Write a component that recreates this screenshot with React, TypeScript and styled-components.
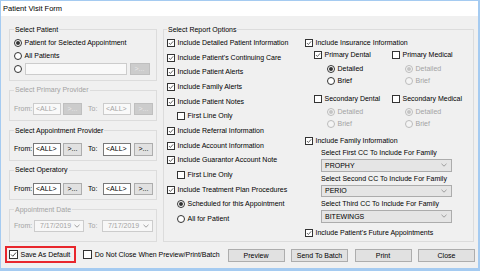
import React from 'react'
import styled, { createGlobalStyle } from 'styled-components'

const GlobalStyle = createGlobalStyle`
  html, body {
    margin: 0;
    padding: 0;
    background: #fff;
  }
  body {
    font-family: 'Liberation Sans', Arial, sans-serif;
    font-size: 7px;
    color: #000;
  }
  * {
    box-sizing: border-box;
  }
`

const Window = styled.div`
  width: 480px;
  height: 271px;
  border: solid #a5cbf1;
  border-width: 1px 2px 3px 1px;
  display: flex;
  flex-direction: column;
  background: #f0f0f0;
  overflow: hidden;
`

const TitleBar = styled.div`
  flex: none;
  height: 15px;
  background: #fff;
  padding-left: 2px;
  font-size: 7.5px;
  line-height: 15px;
`

const Body = styled.div`
  flex: 1;
  display: flex;
  flex-direction: column;
  padding: 9.5px 4px 0 8px;
`

const Main = styled.div`
  display: flex;
  gap: 6px;
  height: 216.5px;
`

const LeftColumn = styled.div`
  width: 148px;
  flex: none;
  display: flex;
  flex-direction: column;
  gap: 5.5px;
`

const Group = styled.fieldset<{ $pad: string; $grow?: boolean }>`
  margin: 0;
  min-width: 0;
  border: 1px solid #dcdcdc;
  padding: ${p => p.$pad};
  flex: ${p => (p.$grow ? 1 : 'none')};
`

const Legend = styled.legend<{ $disabled?: boolean }>`
  padding: 0 1px;
  font-size: 7px;
  line-height: 8px;
  color: ${p => (p.$disabled ? '#a3a3a3' : '#000')};
`

const Row = styled.div<{ $h: number; $indent?: number; $mt?: number; $disabled?: boolean }>`
  display: flex;
  align-items: center;
  height: ${p => p.$h}px;
  margin-top: ${p => p.$mt ?? 0}px;
  padding-left: ${p => p.$indent ?? 0}px;
  white-space: nowrap;
  line-height: 8px;
  color: ${p => (p.$disabled ? '#a3a3a3' : '#000')};
`

const Cell = styled.div<{ $w?: number }>`
  display: flex;
  align-items: center;
  width: ${p => (p.$w ? `${p.$w}px` : 'auto')};
  flex: none;
`

const Box = styled.span<{ $size: number }>`
  width: ${p => p.$size}px;
  height: ${p => p.$size}px;
  flex: none;
  border: 1px solid #333;
  background: #fff;
  display: inline-flex;
  margin-right: 2.5px;
  svg {
    width: 100%;
    height: 100%;
  }
`

const RadioDot = styled.span<{ $on?: boolean; $disabled?: boolean }>`
  width: 8px;
  height: 8px;
  flex: none;
  border-radius: 50%;
  border: 1px solid ${p => (p.$disabled ? '#bcbcbc' : '#333')};
  background: ${p => (p.$disabled ? '#f4f4f4' : '#fff')};
  display: inline-flex;
  align-items: center;
  justify-content: center;
  margin-right: 2.5px;
  &::after {
    content: '';
    display: ${p => (p.$on ? 'block' : 'none')};
    width: 4px;
    height: 4px;
    border-radius: 50%;
    background: ${p => (p.$disabled ? '#c4c4c4' : '#333')};
  }
`

const FieldLabel = styled.span<{ $w: number; $ml?: number }>`
  width: ${p => p.$w}px;
  margin-left: ${p => p.$ml ?? 0}px;
  flex: none;
`

const TextBox = styled.div<{ $w: number; $disabled?: boolean }>`
  width: ${p => p.$w}px;
  height: 12.5px;
  flex: none;
  border: 1px solid ${p => (p.$disabled ? '#cccccc' : '#7a7a7a')};
  background: ${p => (p.$disabled ? '#f9f9f9' : '#fff')};
  color: ${p => (p.$disabled ? '#a3a3a3' : '#000')};
  padding-left: 2px;
  line-height: 10.5px;
`

const SmallButton = styled.div<{ $w: number; $ml: number; $disabled?: boolean }>`
  width: ${p => p.$w}px;
  height: 12.5px;
  margin-left: ${p => p.$ml}px;
  flex: none;
  border: 1px solid ${p => (p.$disabled ? '#bfbfbf' : '#adadad')};
  background: ${p => (p.$disabled ? '#cccccc' : '#e1e1e1')};
  color: ${p => (p.$disabled ? '#e9e9e9' : '#000')};
  text-align: center;
  line-height: 10.5px;
`

const DateBox = styled.div<{ $w: number }>`
  width: ${p => p.$w}px;
  height: 12px;
  flex: none;
  display: flex;
  align-items: center;
  justify-content: space-between;
  border: 1px solid #cccccc;
  background: #f7f7f7;
  color: #a3a3a3;
  padding: 0 3px 0 5px;
`

const Columns = styled.div`
  display: flex;
`

const OptionsColumn = styled.div<{ $w?: number; $pt?: number }>`
  width: ${p => (p.$w ? `${p.$w}px` : 'auto')};
  flex: ${p => (p.$w ? 'none' : 1)};
  padding-top: ${p => p.$pt ?? 0}px;
  display: flex;
  flex-direction: column;
`

const FamilyLabel = styled.div`
  height: 12px;
  line-height: 12px;
  padding-left: 16px;
  white-space: nowrap;
`

const Select = styled.div`
  height: 12.5px;
  width: 131px;
  margin: 0 0 1px 16px;
  display: flex;
  align-items: center;
  justify-content: space-between;
  border: 1px solid #acacac;
  background: #e5e5e5;
  padding: 0 4px 0 3px;
`

const Footer = styled.div`
  display: flex;
  align-items: flex-end;
  height: 16.7px;
  margin: 4px 0 0 -4px;
`

const DefaultFrame = styled.div`
  display: flex;
  align-items: center;
  height: 16.7px;
  border: 2px solid #e8262c;
  padding: 0 4px 0 2px;
  align-self: stretch;
`

const FooterCheck = styled.div`
  display: flex;
  align-items: center;
  align-self: center;
  margin-left: 7px;
  white-space: nowrap;
`

const ButtonBar = styled.div`
  margin-left: auto;
  display: flex;
  gap: 6.5px;
  margin-right: -1px;
  padding-bottom: 0.5px;
`

const PushButton = styled.div`
  width: 57px;
  height: 13.5px;
  border: 1px solid #adadad;
  background: #e1e1e1;
  text-align: center;
  line-height: 11.5px;
`

const Chevron = () => (
  <svg width="6" height="4" viewBox="0 0 6 4">
    <polyline points="0.5,0.8 3,3.2 5.5,0.8" fill="none" stroke="#8a8a8a" strokeWidth="0.8" />
  </svg>
)

const CheckBox = ({ checked, size = 8 }: { checked?: boolean; size?: number }) => (
  <Box $size={size}>
    {checked && (
      <svg viewBox="0 0 6 6">
        <polyline points="0.9,3 2.4,4.5 5.2,1.3" fill="none" stroke="#333" strokeWidth="0.75" />
      </svg>
    )}
  </Box>
)

type ProviderRowProps = { disabled?: boolean }

const ProviderRow = ({ disabled }: ProviderRowProps) => (
  <Row $h={13} $disabled={disabled}>
    <FieldLabel $w={19}>From:</FieldLabel>
    <TextBox $w={28} $disabled={disabled}>&lt;ALL&gt;</TextBox>
    <SmallButton $w={19} $ml={2} $disabled={disabled}>&gt;...</SmallButton>
    <FieldLabel $w={15} $ml={6}>To:</FieldLabel>
    <TextBox $w={28} $disabled={disabled}>&lt;ALL&gt;</TextBox>
    <SmallButton $w={19} $ml={3} $disabled={disabled}>&gt;...</SmallButton>
  </Row>
)

const reportOptions: { label: string; checked: boolean; indent?: number; radio?: boolean }[] = [
  { label: 'Include Detailed Patient Information', checked: true },
  { label: "Include Patient's Continuing Care", checked: true },
  { label: 'Include Patient Alerts', checked: true },
  { label: 'Include Family Alerts', checked: true },
  { label: 'Include Patient Notes', checked: true },
  { label: 'First Line Only', checked: false, indent: 10 },
  { label: 'Include Referral Information', checked: true },
  { label: 'Include Account Information', checked: true },
  { label: 'Include Guarantor Account Note', checked: true },
  { label: 'First Line Only', checked: false, indent: 10 },
  { label: 'Include Treatment Plan Procedures', checked: true },
  { label: 'Scheduled for this Appointment', checked: true, indent: 10, radio: true },
  { label: 'All for Patient', checked: false, indent: 10, radio: true },
]

type InsurancePairProps = {
  mt?: number
  left: string
  right: string
  leftOn?: boolean
  enabled?: boolean
}

const InsuranceBlock = ({ mt, left, right, leftOn, enabled }: InsurancePairProps) => (
  <>
    <Row $h={12.5} $indent={9} $mt={mt}>
      <Cell $w={78}>
        <CheckBox checked={leftOn} />
        {left}
      </Cell>
      <Cell>
        <CheckBox />
        {right}
      </Cell>
    </Row>
    {['Detailed', 'Brief'].map((label, i) => (
      <Row key={label} $h={12.5} $indent={22} $mt={i === 0 ? 0.8 : 0}>
        <Cell $w={78} style={{ color: enabled ? '#000' : '#a3a3a3' }}>
          <RadioDot $on={i === 0} $disabled={!enabled} />
          {label}
        </Cell>
        <Cell style={{ color: '#a3a3a3' }}>
          <RadioDot $on={i === 0} $disabled />
          {label}
        </Cell>
      </Row>
    ))}
  </>
)

const familyCodes = [
  { label: 'Select First CC To Include For Family', value: 'PROPHY' },
  { label: 'Select Second CC To Include For Family', value: 'PERIO' },
  { label: 'Select Third CC To Include For Family', value: 'BITEWINGS' },
]

export default function App() {
  return (
    <>
      <GlobalStyle />
      <Window>
        <TitleBar>Patient Visit Form</TitleBar>
        <Body>
          <Main>
            <LeftColumn>
              <Group $pad="2.5px 4px 4px">
                <Legend>Select Patient</Legend>
                <Row $h={13.3}>
                  <RadioDot $on />
                  Patient for Selected Appointment
                </Row>
                <Row $h={13.3}>
                  <RadioDot />
                  All Patients
                </Row>
                <Row $h={13.3}>
                  <RadioDot />
                  <TextBox $w={102} $disabled />
                  <SmallButton $w={20} $ml={3} $disabled>
                    &gt;...
                  </SmallButton>
                </Row>
              </Group>

              <Group $pad="8px 4px 5px">
                <Legend $disabled>Select Primary Provider</Legend>
                <ProviderRow disabled />
              </Group>

              <Group $pad="8px 4px 4px">
                <Legend>Select Appointment Provider</Legend>
                <ProviderRow />
              </Group>

              <Group $pad="8px 4px 4px">
                <Legend>Select Operatory</Legend>
                <ProviderRow />
              </Group>

              <Group $pad="6px 4px 9px">
                <Legend $disabled>Appointment Date</Legend>
                <Row $h={12} $disabled>
                  <FieldLabel $w={20}>From:</FieldLabel>
                  <DateBox $w={50}>
                    7/17/2019
                    <Chevron />
                  </DateBox>
                  <FieldLabel $w={14} $ml={4}>To:</FieldLabel>
                  <DateBox $w={51}>
                    7/17/2019
                    <Chevron />
                  </DateBox>
                </Row>
              </Group>
            </LeftColumn>

            <Group $pad="2px 4px 0 3px" $grow>
              <Legend>Select Report Options</Legend>
              <Columns>
                <OptionsColumn $w={138}>
                  {reportOptions.map((opt, i) => (
                    <Row key={i} $h={14.7} $indent={opt.indent}>
                      {opt.radio ? <RadioDot $on={opt.checked} /> : <CheckBox checked={opt.checked} />}
                      {opt.label}
                    </Row>
                  ))}
                </OptionsColumn>

                <OptionsColumn $pt={1}>
                  <Row $h={12.5}>
                    <CheckBox checked />
                    Include Insurance Information
                  </Row>
                  <InsuranceBlock left="Primary Dental" right="Primary Medical" leftOn enabled />
                  <InsuranceBlock mt={5} left="Secondary Dental" right="Secondary Medical" />
                  <Row $h={12.5} $mt={4}>
                    <CheckBox checked />
                    Include Family Information
                  </Row>
                  {familyCodes.map(code => (
                    <React.Fragment key={code.value}>
                      <FamilyLabel>{code.label}</FamilyLabel>
                      <Select>
                        {code.value}
                        <Chevron />
                      </Select>
                    </React.Fragment>
                  ))}
                  <Row $h={12.5} $mt={3.2}>
                    <CheckBox checked />
                    Include Patient's Future Appointments
                  </Row>
                </OptionsColumn>
              </Columns>
            </Group>
          </Main>

          <Footer>
            <DefaultFrame>
              <CheckBox checked size={9} />
              Save As Default
            </DefaultFrame>
            <FooterCheck>
              <CheckBox size={9} />
              Do Not Close When Preview/Print/Batch
            </FooterCheck>
            <ButtonBar>
              <PushButton>Preview</PushButton>
              <PushButton>Send To Batch</PushButton>
              <PushButton>Print</PushButton>
              <PushButton>Close</PushButton>
            </ButtonBar>
          </Footer>
        </Body>
      </Window>
    </>
  )
}
